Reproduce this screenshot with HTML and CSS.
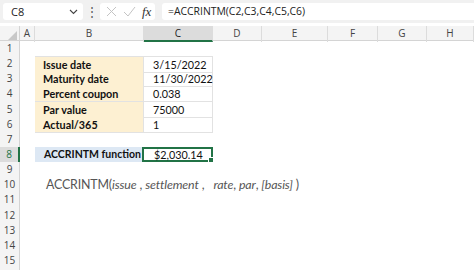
FILE: index.html
```html
<html>

<head>
    <meta charset="UTF-8">
    <title>ACCRINTM</title>
    <link rel="stylesheet" href="styles.css">
</head>

<body>
    <div class="toolbar">
        <div class="name-box">
            <span>C8</span>
            <svg class="chevron" width="9" height="6" viewBox="0 0 9 6"><path d="M1 1l3.5 3.5L8 1" fill="none" stroke="#444" stroke-width="1.1"/></svg>
        </div>
        <div class="dots">&#8942;</div>
        <div class="fx-box">
            <svg width="11" height="11" viewBox="0 0 11 11"><path d="M1 1l9 9M10 1l-9 9" stroke="#c4c4c4" stroke-width="1"/></svg>
            <svg width="13" height="11" viewBox="0 0 13 11"><path d="M1 6l4 4 7-9" fill="none" stroke="#c4c4c4" stroke-width="1"/></svg>
            <span class="fx">fx</span>
        </div>
        <div class="formula">=ACCRINTM(C2,C3,C4,C5,C6)</div>
    </div>

    <div class="sheet">
        <div class="row head">
            <div class="corner"><span class="tri"></span></div>
            <div class="col">A</div>
            <div class="col">B</div>
            <div class="col active">C</div>
            <div class="col">D</div>
            <div class="col">E</div>
            <div class="col">F</div>
            <div class="col">G</div>
            <div class="col">H</div>
        </div>

        <div class="row"><div class="num">1</div></div>
        <div class="row">
            <div class="num">2</div><div></div>
            <div class="cell label top">Issue date</div>
            <div class="cell value top">3/15/2022</div>
        </div>
        <div class="row">
            <div class="num">3</div><div></div>
            <div class="cell label">Maturity date</div>
            <div class="cell value">11/30/2022</div>
        </div>
        <div class="row">
            <div class="num">4</div><div></div>
            <div class="cell label">Percent coupon</div>
            <div class="cell value">0.038</div>
        </div>
        <div class="row">
            <div class="num">5</div><div></div>
            <div class="cell label">Par value</div>
            <div class="cell value">75000</div>
        </div>
        <div class="row">
            <div class="num">6</div><div></div>
            <div class="cell label">Actual/365</div>
            <div class="cell value">1</div>
        </div>
        <div class="row"><div class="num">7</div></div>
        <div class="row">
            <div class="num active">8</div><div></div>
            <div class="cell result-label">ACCRINTM function</div>
            <div class="cell result">$2,030.14<span class="handle"></span></div>
        </div>
        <div class="row"><div class="num">9</div></div>
        <div class="row">
            <div class="num">10</div><div></div>
            <div class="syntax">ACCRINTM(<i>issue</i> , <i>settlement</i> , &nbsp; <i>rate</i>, <i>par</i>, <i>[basis]</i> )</div>
        </div>
        <div class="row"><div class="num">11</div></div>
        <div class="row"><div class="num">12</div></div>
        <div class="row"><div class="num">13</div></div>
        <div class="row"><div class="num">14</div></div>
        <div class="row"><div class="num">15</div></div>
        <div class="row"><div class="num"></div></div>
    </div>
</body>

</html>
```

FILE: styles.css
```css
body {
    margin: 0;
    font-family: "Open Sans", Arial, sans-serif;
    background: #fff;
    overflow: hidden;
}

.toolbar {
    display: flex;
    align-items: center;
    height: 23px;
    background: #f1f1f1;
    padding-left: 3px;
    margin-bottom: 3px;
}

.name-box {
    display: flex;
    align-items: center;
    justify-content: space-between;
    width: 80px;
    height: 17px;
    background: #fff;
    border-radius: 3px;
    padding: 0 5px 0 8px;
    box-sizing: border-box;
    font-size: 11px;
    color: #222;
}

.dots {
    width: 17px;
    text-align: center;
    font-size: 12px;
    color: #555;
}

.fx-box {
    display: flex;
    align-items: center;
    gap: 6px;
    width: 55px;
    height: 17px;
    background: #fff;
    border-radius: 3px;
    padding-left: 6px;
    box-sizing: border-box;
}

.fx {
    font-family: "Liberation Serif", serif;
    font-style: italic;
    font-size: 13px;
    color: #333;
}

.formula {
    flex: 1;
    height: 17px;
    margin-left: 7px;
    background: #fff;
    border-radius: 3px 0 0 3px;
    padding-left: 6px;
    font-size: 10.4px;
    line-height: 17px;
    color: #222;
}

.sheet {
    display: flex;
    flex-direction: column;
}

.row {
    display: grid;
    grid-template-columns: 20px 15px 109px 69px 49px 66px 50px 49px 1fr;
    height: 15.15px;
}

.row.head {
    height: 15px;
    background: #f4f4f4;
    border-bottom: 1px solid #d4d4d4;
    box-sizing: border-box;
}

.corner {
    position: relative;
    border-right: 1px solid #d4d4d4;
}

.tri {
    position: absolute;
    right: 2px;
    bottom: 2px;
    border-left: 9px solid transparent;
    border-bottom: 9px solid #c8c8c8;
}

.col {
    text-align: center;
    font-size: 10px;
    line-height: 14px;
    color: #444;
    border-right: 1px solid #dcdcdc;
}

.col.active {
    background: #dcdcdc;
    border-bottom: 2px solid #217346;
    color: #222;
}

.num {
    background: #f4f4f4;
    border-right: 1px solid #d4d4d4;
    text-align: center;
    font-size: 10px;
    line-height: 15px;
    color: #444;
}

.num.active {
    background: #dcdcdc;
    border-right: 2px solid #217346;
    color: #217346;
}

.cell {
    font-family: Lato, "Liberation Sans", sans-serif;
    font-size: 10.8px;
    line-height: 15px;
    color: #111;
    white-space: nowrap;
    box-sizing: border-box;
    border-bottom: 1px solid #e2e2e2;
    border-right: 1px solid #e2e2e2;
}

.cell.top {
    border-top: 1px solid #e2e2e2;
}

.label {
    background: #fdf0d2;
    font-weight: bold;
    padding-left: 8px;
}

.value {
    padding-left: 9px;
}

.result-label {
    background: #dde8f4;
    font-weight: bold;
    font-size: 10.5px;
    padding-left: 9px;
    margin-right: 2px;
    border: none;
}

.result {
    position: relative;
    margin-left: -2px;
    border: 2px solid #217346;
    padding-left: 10px;
    line-height: 11px;
}

.handle {
    position: absolute;
    right: -3px;
    bottom: -3px;
    width: 4px;
    height: 4px;
    background: #217346;
    border: 1px solid #fff;
}

.syntax {
    grid-column: 3 / 10;
    padding-left: 11px;
    font-family: Lato, "Liberation Sans", sans-serif;
    font-size: 12.4px;
    letter-spacing: -0.15px;
    line-height: 15px;
    color: #555;
    white-space: nowrap;
}
```
